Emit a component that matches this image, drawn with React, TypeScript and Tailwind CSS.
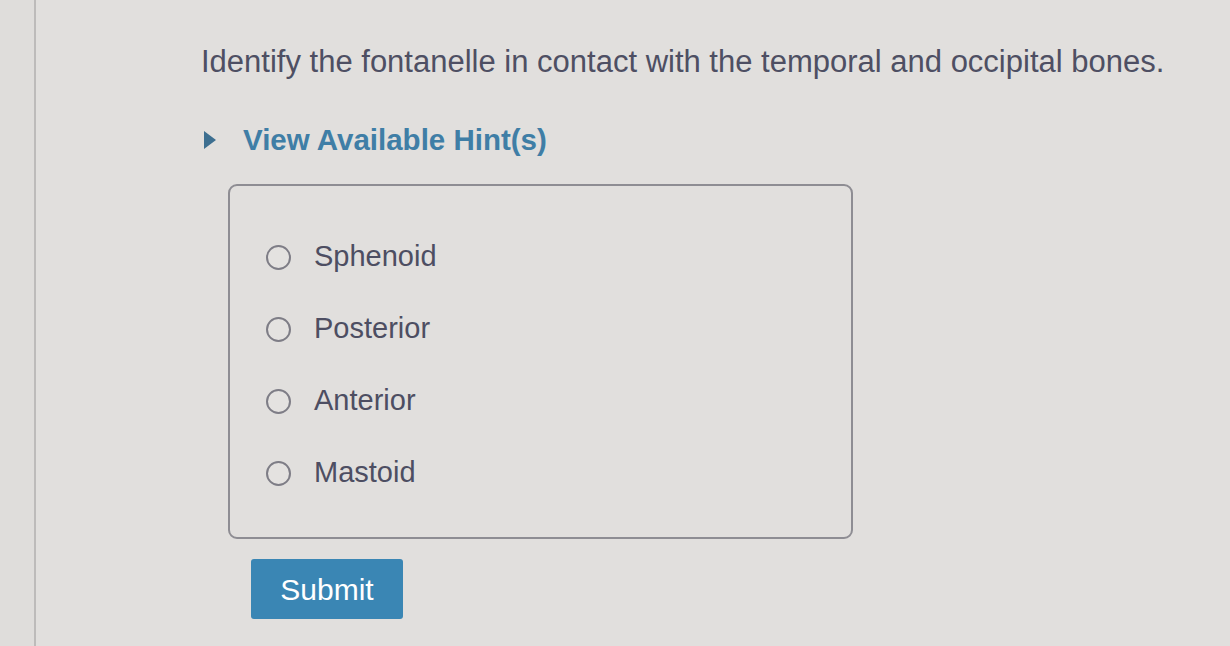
import React from "react";

const options = ["Sphenoid", "Posterior", "Anterior", "Mastoid"];

export default function App() {
    return (
        <div className="flex h-[646px] w-full overflow-hidden bg-[#e1dfdd] font-['Liberation_Sans',Arial,sans-serif]">
            {/* panel edge on the left */}
            <div className="w-[36px] shrink-0 border-r-2 border-[#bdbbba] bg-[#dfdddb]" />

            <div className="flex flex-col pl-[165px] pt-[42px]">
                <h1 className="text-[31px] leading-[40px] text-[#4e4f63] whitespace-nowrap">
                    Identify the fontanelle in contact with the temporal and occipital bones.
                </h1>

                {/* hint toggle */}
                <button className="mt-[38px] flex items-center gap-[26px] text-left">
                    <svg width="14" height="20" viewBox="0 0 14 20" className="ml-[2px]">
                        <path d="M1 1 L13 10 L1 19 Z" fill="#3d6f90" />
                    </svg>
                    <span className="text-[29.5px] font-bold leading-[40px] text-[#3f7ea6]">
                        View Available Hint(s)
                    </span>
                </button>

                {/* answer choices */}
                <div className="mt-[24px] ml-[27px] flex h-[355px] w-[625px] flex-col gap-[32px] rounded-[9px] border-2 border-[#8e8d93] pl-[36px] pt-[51px]">
                    {options.map((opt) => (
                        <label key={opt} className="flex h-[40px] items-center gap-[23px]">
                            <span className="h-[25px] w-[25px] rounded-full border-2 border-[#7e7d86] bg-[#e4e2e0]" />
                            <span className="text-[29px] text-[#4d4e62]">{opt}</span>
                        </label>
                    ))}
                </div>

                <button className="mt-[20px] ml-[50px] flex h-[60px] w-[152px] items-center justify-center rounded-[3px] bg-[#3a86b4] text-[30px] text-white">
                    Submit
                </button>
            </div>
        </div>
    );
}
